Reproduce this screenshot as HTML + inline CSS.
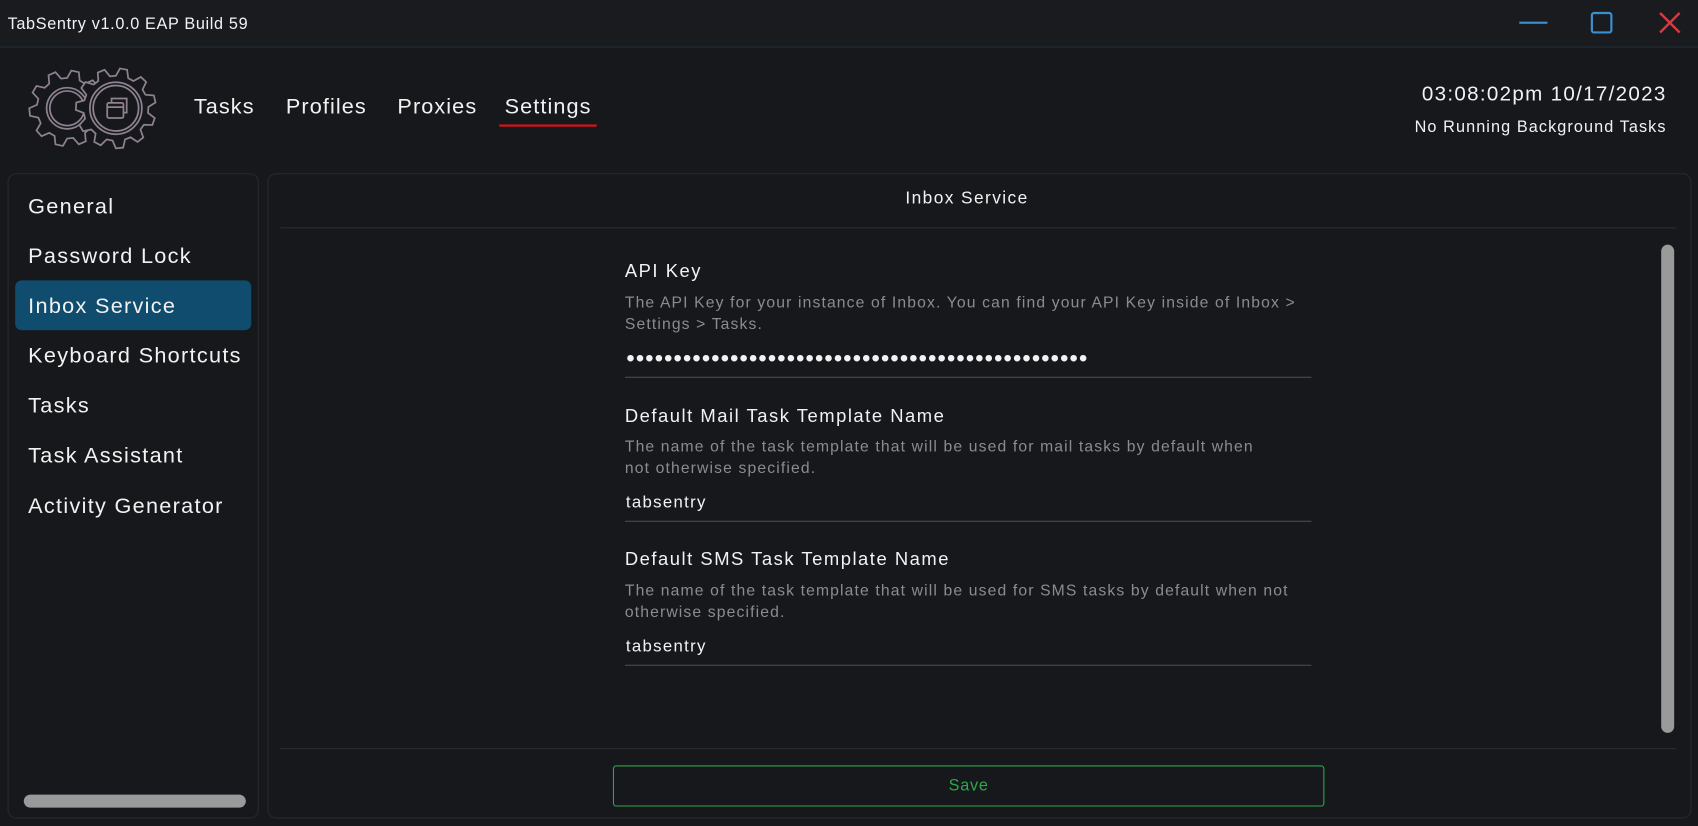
<!DOCTYPE html>
<html><head><meta charset="utf-8"><style>
html,body{margin:0;padding:0;background:#17181c;overflow:hidden;width:1698px;height:826px}
#w{position:absolute;left:0;top:0;width:1568px;height:763px;transform:scale(1.08291,1.0826);transform-origin:0 0;font-family:"Liberation Sans",sans-serif;color:#f2f2f2}
.a{position:absolute;white-space:nowrap}
.nav{font-size:20px;top:88px;letter-spacing:1px}
.side{left:26px;font-size:20px;letter-spacing:1.2px}
.lbl{left:577px;font-size:17px;letter-spacing:1.4px}
.desc{left:577px;font-size:14.5px;color:#8c8c8c;line-height:20px;letter-spacing:1.05px}
.val{left:578px;font-size:15.5px;letter-spacing:1.2px}
.ln{position:absolute;left:577px;width:634px;height:1px;background:#4a4c52}
</style></head><body><div id="w">
<div class="a" style="left:0;top:0;width:1568px;height:43px;background:#1a1b1f;border-bottom:1px solid #1d3038"></div>
<div class="a" style="left:7px;top:14px;font-size:15px;letter-spacing:0.6px">TabSentry v1.0.0 EAP Build 59</div>
<div class="a" style="left:1403px;top:20px;width:26px;height:2px;background:#3a8fd0"></div>
<div class="a" style="left:1469px;top:11px;width:16px;height:16px;border:2px solid #3a8fd0;border-radius:3px"></div>
<svg class="a" style="left:1530px;top:9px" width="24" height="24"><path d="M3 3L21 21M21 3L3 21" stroke="#d83a45" stroke-width="2.2"/></svg>
<svg id="logo" class="a" style="left:0;top:40px" width="170" height="120" viewBox="0 40 170 120">
<g id="gl" fill="#17181c" stroke="#8e8190" stroke-width="1.6"></g></svg>
<script>
function gear(cx,cy,R,r,n){var d="",st=2*Math.PI/n;for(var i=0;i<n;i++){var a=i*st-Math.PI/2;var pts=[[r,a],[R,a+st*0.18],[R,a+st*0.5],[r,a+st*0.68]];pts.forEach(function(p,j){d+=(i==0&&j==0?"M":"L")+(cx+p[0]*Math.cos(p[1])).toFixed(1)+" "+(cy+p[0]*Math.sin(p[1])).toFixed(1)+" ";});}return d+"Z";}
var g=document.getElementById("gl");
g.innerHTML='<path d="'+gear(62,100,35,28,10)+'"/><circle cx="62" cy="100" r="19" fill="none"/><circle cx="62" cy="100" r="16" fill="none"/>'+
'<path d="'+gear(107,100,37,30,11)+'"/><circle cx="107" cy="100" r="24"/><circle cx="107" cy="100" r="21"/>'+
'<rect x="99" y="95" width="15" height="14" rx="1.5" fill="none"/><path d="M99 99h15" /><path d="M103 95v-4h14v13h-3" fill="none"/>';
</script>
<div class="a nav" style="left:179px">Tasks</div>
<div class="a nav" style="left:264px">Profiles</div>
<div class="a nav" style="left:367px">Proxies</div>
<div class="a nav" style="left:466px">Settings</div>
<div class="a" style="left:461px;top:115px;width:90px;height:2px;background:#e0101a"></div>
<div class="a" style="right:29px;top:77px;font-size:19px;letter-spacing:1.2px">03:08:02pm 10/17/2023</div>
<div class="a" style="right:29px;top:109px;font-size:15px;letter-spacing:1px">No Running Background Tasks</div>
<div class="a" style="left:7px;top:160px;width:230px;height:594px;border:1px solid #252a30;border-radius:8px"></div>
<div class="a" style="left:14px;top:259px;width:218px;height:46px;background:#0f4c6e;border-radius:6px"></div>
<div class="a side" style="top:180px">General</div>
<div class="a side" style="top:226px">Password Lock</div>
<div class="a side" style="top:272px">Inbox Service</div>
<div class="a side" style="top:318px">Keyboard Shortcuts</div>
<div class="a side" style="top:364px">Tasks</div>
<div class="a side" style="top:410px">Task Assistant</div>
<div class="a side" style="top:457px">Activity Generator</div>
<div class="a" style="left:22px;top:734px;width:205px;height:12px;background:#9a9a9a;border-radius:6px"></div>
<div class="a" style="left:247px;top:160px;width:1313px;height:594px;border:1px solid #252a30;border-radius:8px"></div>
<div class="a" style="left:247px;width:1292px;top:175px;text-align:center;font-size:16px;letter-spacing:1.3px">Inbox Service</div>
<div class="a" style="left:259px;top:210px;width:1289px;height:1px;background:#2a2d33"></div>
<div class="a lbl" style="top:241px">API Key</div>
<div class="a desc" style="top:270px">The API Key for your instance of Inbox. You can find your API Key inside of Inbox &gt;<br>Settings &gt; Tasks.</div>
<div class="a val" style="top:322px;letter-spacing:0.25px;font-size:14px">●●●●●●●●●●●●●●●●●●●●●●●●●●●●●●●●●●●●●●●●●●●●●●●●●</div>
<div class="ln" style="top:348px"></div>
<div class="a lbl" style="top:375px">Default Mail Task Template Name</div>
<div class="a desc" style="top:403px">The name of the task template that will be used for mail tasks by default when<br>not otherwise specified.</div>
<div class="a val" style="top:456px">tabsentry</div>
<div class="ln" style="top:481px"></div>
<div class="a lbl" style="top:507px">Default SMS Task Template Name</div>
<div class="a desc" style="top:536px">The name of the task template that will be used for SMS tasks by default when not<br>otherwise specified.</div>
<div class="a val" style="top:589px">tabsentry</div>
<div class="ln" style="top:614px"></div>
<div class="a" style="left:1534px;top:226px;width:12px;height:451px;background:#9a9a9a;border-radius:6px"></div>
<div class="a" style="left:259px;top:691px;width:1289px;height:1px;background:#2a2d33"></div>
<div class="a" style="left:566px;top:707px;width:655px;height:36px;border:1px solid #2aa84a;border-radius:3px;text-align:center;line-height:36px;color:#2aa84a;font-size:15px;letter-spacing:0.7px">Save</div>
</div></body></html>
